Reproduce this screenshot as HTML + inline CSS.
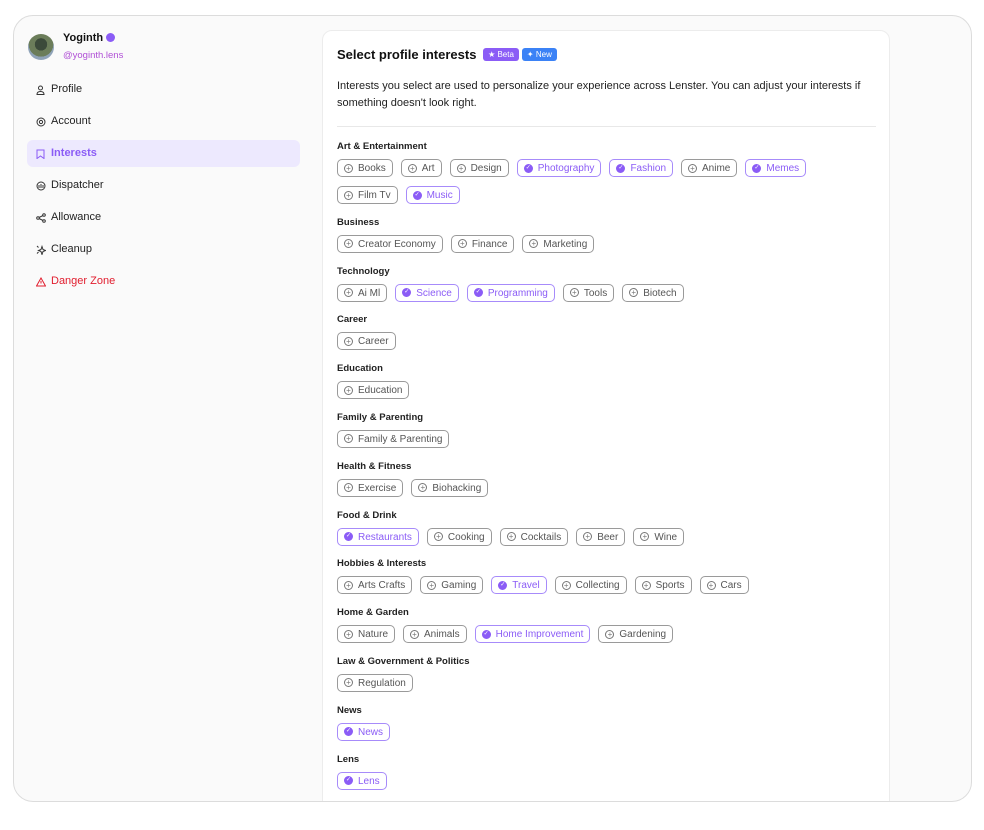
<!DOCTYPE html>
<html><head><meta charset="utf-8"><style>
*{box-sizing:border-box;margin:0;padding:0}
body{width:984px;height:830px;background:#fff;font-family:"Liberation Sans",sans-serif;position:relative;overflow:hidden;color:#111}
.frame{position:absolute;left:13px;top:15px;width:959px;height:787px;border:1.5px solid #dcdcdc;border-radius:20px;background:#fafafa;overflow:hidden}
.av{position:absolute;left:14px;top:18px;width:26px;height:26px;border-radius:50%;background:radial-gradient(circle at 50% 40%,#3b4a3a 0 30%,#6b7d5a 31% 60%,#8fa3b8 61%)}
.name{position:absolute;left:49px;top:16px;font-size:11px;font-weight:bold;white-space:nowrap}
.name i{display:inline-block;width:9px;height:9px;border-radius:50%;background:#8b5cf6;margin-left:3px;vertical-align:-1px}
.handle{position:absolute;left:49px;top:34px;font-size:9.5px;color:#b04fd6}
.mi{position:absolute;left:13px;width:273px;height:27px;border-radius:6px;font-size:11px;line-height:27px;padding-left:24px;color:#222}
.mi svg{position:absolute;left:9px;top:8.5px}
.mi.act{background:#ede9fe;color:#8b5cf6;font-weight:bold}
.mi.red{color:#e11d2e}
.card{position:absolute;left:308px;top:14px;width:568px;height:800px;background:#fff;border:1px solid #ececec;border-radius:10px}
h1{position:absolute;left:14px;top:16px;font-size:13px;font-weight:bold;white-space:nowrap}
.bd{display:inline-block;font-size:8px;color:#fff;border-radius:3px;padding:1px 5px;vertical-align:2px;margin-left:3px;font-weight:normal;line-height:11px}
p.d{position:absolute;left:14px;top:47px;width:540px;font-size:11px;line-height:17px;color:#222}
hr{position:absolute;left:14px;top:95px;width:539px;border:0;border-top:1px solid #e8e8e8}
.list{position:absolute;left:14px;top:108px;width:540px}
.sec{height:48.8px}
.sec.two{height:75.8px}
.lab{font-size:9.5px;font-weight:bold;height:16px;line-height:16px;margin-bottom:4px;color:#222}
.row{display:flex;flex-wrap:wrap;gap:9px 8px}
.c{height:18px;border:1px solid #9a9a9a;border-radius:5px;font-size:10px;line-height:11px;color:#555;padding:1px 6px 0;display:flex;align-items:center;gap:5px;white-space:nowrap}
.c::before{content:"+";flex:none;width:9px;height:9px;margin-top:-1px;border:1px solid #777;border-radius:50%;font-size:8px;line-height:7px;text-align:center;color:#777;box-sizing:border-box}
.c.s{border-color:#a78bfa;color:#8b5cf6}
.c.s::before{content:"✓";background:#8b5cf6;border-color:#8b5cf6;color:#fff;font-size:6px;line-height:7px}
</style></head><body>
<div class="frame">
<div class="av"></div>
<div class="name">Yoginth<i></i></div>
<div class="handle">@yoginth.lens</div>
<div class="mi" style="top:60px"><svg width="9" height="10" viewBox="0 0 9 10" fill="none" stroke="#333"><circle cx="4.5" cy="3" r="2"/><path d="M1 9.5c0-2 1.5-3 3.5-3s3.5 1 3.5 3z"/></svg>Profile</div>
<div class="mi" style="top:92px"><svg width="10" height="10" viewBox="0 0 10 10" fill="none" stroke="#333"><circle cx="5" cy="5" r="4"/><circle cx="5" cy="5" r="1.6"/></svg>Account</div>
<div class="mi act" style="top:124px"><svg width="9" height="10" viewBox="0 0 9 10" fill="none" stroke="#8b5cf6"><path d="M1 1h7v8.5L4.5 7 1 9.5z"/></svg>Interests</div>
<div class="mi" style="top:156px"><svg width="10" height="10" viewBox="0 0 10 10" fill="none" stroke="#333"><circle cx="5" cy="5" r="4"/><path d="M5 3v4M3 4v3M7 4v3"/></svg>Dispatcher</div>
<div class="mi" style="top:188px"><svg width="10" height="10" viewBox="0 0 10 10" fill="none" stroke="#333"><circle cx="2" cy="5" r="1.3"/><circle cx="8" cy="2" r="1.3"/><circle cx="8" cy="8" r="1.3"/><path d="M3 4.5 7 2.5M3 5.5 7 7.5"/></svg>Allowance</div>
<div class="mi" style="top:220px"><svg width="10" height="10" viewBox="0 0 10 10" fill="none" stroke="#333"><path d="M6 1.5 7 4.5 9.5 5.5 7 6.5 6 9.5 5 6.5 2.5 5.5 5 4.5z"/><path d="M1 1l1.5 1.5M1 8.5 2.5 7"/></svg>Cleanup</div>
<div class="mi red" style="top:252px"><svg width="10" height="10" viewBox="0 0 10 10" fill="none" stroke="#e11d2e"><path d="M5 1 9.5 9h-9z"/><path d="M5 4v2.5"/></svg>Danger Zone</div>

<div class="card">
<h1>Select profile interests <span class="bd" style="background:#8b5cf6">★ Beta</span><span class="bd" style="background:#3b82f6">✦ New</span></h1>
<p class="d">Interests you select are used to personalize your experience across Lenster. You can adjust your interests if something doesn't look right.</p>
<hr>
<div class="list">
<div class="sec two"><div class="lab">Art &amp; Entertainment</div><div class="row"><span class="c">Books</span><span class="c">Art</span><span class="c">Design</span><span class="c s">Photography</span><span class="c s">Fashion</span><span class="c">Anime</span><span class="c s">Memes</span></div><div class="row" style="margin-top:9px"><span class="c">Film Tv</span><span class="c s">Music</span></div></div>
<div class="sec"><div class="lab">Business</div><div class="row"><span class="c">Creator Economy</span><span class="c">Finance</span><span class="c">Marketing</span></div></div>
<div class="sec"><div class="lab">Technology</div><div class="row"><span class="c">Ai Ml</span><span class="c s">Science</span><span class="c s">Programming</span><span class="c">Tools</span><span class="c">Biotech</span></div></div>
<div class="sec"><div class="lab">Career</div><div class="row"><span class="c">Career</span></div></div>
<div class="sec"><div class="lab">Education</div><div class="row"><span class="c">Education</span></div></div>
<div class="sec"><div class="lab">Family &amp; Parenting</div><div class="row"><span class="c">Family &amp; Parenting</span></div></div>
<div class="sec"><div class="lab">Health &amp; Fitness</div><div class="row"><span class="c">Exercise</span><span class="c">Biohacking</span></div></div>
<div class="sec"><div class="lab">Food &amp; Drink</div><div class="row"><span class="c s">Restaurants</span><span class="c">Cooking</span><span class="c">Cocktails</span><span class="c">Beer</span><span class="c">Wine</span></div></div>
<div class="sec"><div class="lab">Hobbies &amp; Interests</div><div class="row"><span class="c">Arts Crafts</span><span class="c">Gaming</span><span class="c s">Travel</span><span class="c">Collecting</span><span class="c">Sports</span><span class="c">Cars</span></div></div>
<div class="sec"><div class="lab">Home &amp; Garden</div><div class="row"><span class="c">Nature</span><span class="c">Animals</span><span class="c s">Home Improvement</span><span class="c">Gardening</span></div></div>
<div class="sec"><div class="lab">Law &amp; Government &amp; Politics</div><div class="row"><span class="c">Regulation</span></div></div>
<div class="sec"><div class="lab">News</div><div class="row"><span class="c s">News</span></div></div>
<div class="sec"><div class="lab">Lens</div><div class="row"><span class="c s">Lens</span></div></div>
</div>
</div>
</div>
</body></html>
